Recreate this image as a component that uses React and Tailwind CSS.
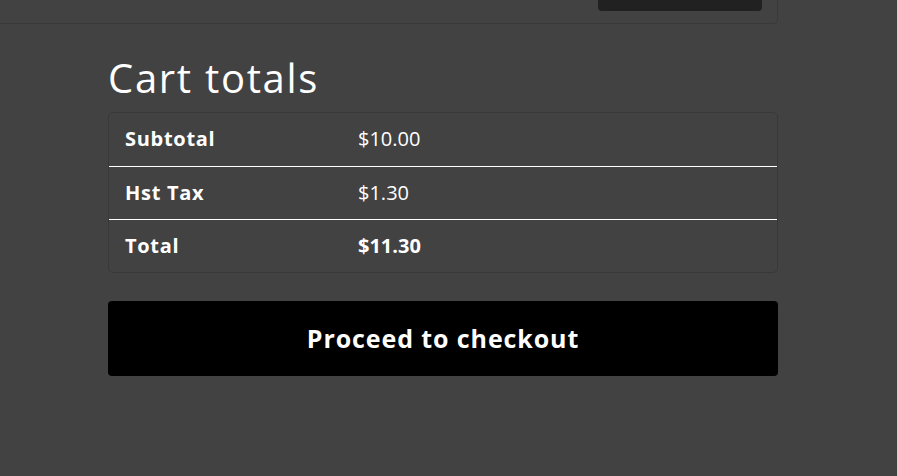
const rows = [
  { label: "Subtotal", value: "$10.00" },
  { label: "Hst Tax", value: "$1.30" },
  { label: "Total", value: "$11.30", strong: true },
];

const App = () => {
  return (
    <div
      className="min-h-[476px] w-full bg-[#424242] text-white"
      style={{ fontFamily: '"Open Sans", "Noto Sans", sans-serif' }}
    >
      <div className="flex h-[24px] w-[778px] justify-end rounded-br-[5px] border-r border-b border-[#393939] pr-[15px]">
        <div className="h-[11px] w-[164px] rounded-b-[4px] bg-[#212121]" />
      </div>

      <div className="ml-[108px] w-[670px]">
        <h2 className="mt-[28px] text-[40px] leading-[52px] font-normal tracking-[1.7px]">Cart totals</h2>

        <div className="mt-[8px] rounded-[5px] border border-[#393939]">
          {rows.map((row, i) => (
            <div
              key={row.label}
              className={
                "grid h-[53px] grid-cols-[233px_1fr] items-center pb-[1px] text-[20px] " +
                (i > 0 ? "border-t border-white" : "")
              }
            >
              <span className="pl-[16px] font-bold tracking-[0.7px]">{row.label}</span>
              <span className={row.strong ? "pl-[16px] font-bold" : "pl-[16px]"}>
                {row.value}
              </span>
            </div>
          ))}
        </div>

        <button
          type="button"
          className="mt-[28px] flex h-[75px] w-full items-center justify-center rounded-[4px] bg-black text-[25px] font-bold tracking-[0.9px] text-white"
        >
          Proceed to checkout
        </button>
      </div>
    </div>
  );
};

export default App;
